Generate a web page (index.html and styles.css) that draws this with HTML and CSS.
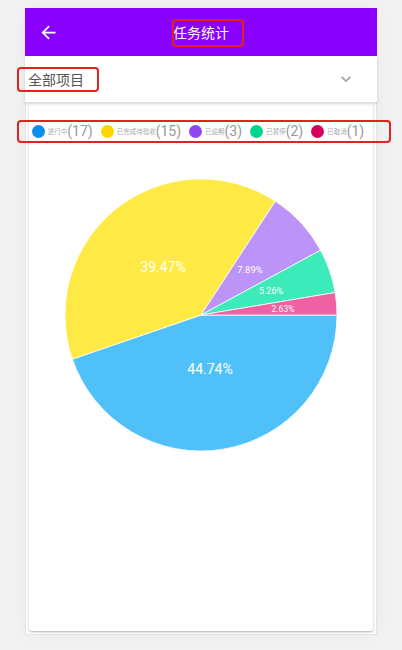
FILE: index.html
```html
<!DOCTYPE html>
<html lang="zh-CN">
<head>
<meta charset="utf-8">
<title>任务统计</title>
<link rel="stylesheet" href="styles.css">
</head>
<body>
<div class="page">
  <div class="app">
    <header class="topbar">
      <svg class="back" viewBox="0 0 24 24" width="21" height="21"><path fill="#fff" d="M20 11H7.83l5.59-5.59L12 4l-8 8 8 8 1.41-1.41L7.83 13H20v-2z"/></svg>
      <h1 class="title">任务统计</h1>
      <span class="spacer"></span>
    </header>
    <div class="select">
      <span class="select-text">全部项目</span>
      <svg class="chev" viewBox="0 0 24 24" width="20" height="20"><path fill="#9e9e9e" d="M16.59 8.59L12 13.17 7.41 8.59 6 10l6 6 6-6z"/></svg>
    </div>
    <div class="body">
      <div class="card">
        <ul class="legend">
          <li class="item"><span class="dot c1"></span><span class="lab">进行中</span><span class="num">(17)</span></li>
          <li class="item"><span class="dot c2"></span><span class="lab">已完成待验收</span><span class="num">(15)</span></li>
          <li class="item"><span class="dot c3"></span><span class="lab">已逾期</span><span class="num">(3)</span></li>
          <li class="item"><span class="dot c4"></span><span class="lab">已暂停</span><span class="num">(2)</span></li>
          <li class="item"><span class="dot c5"></span><span class="lab">已取消</span><span class="num">(1)</span></li>
        </ul>
        <svg class="pie" viewBox="0 0 344 490" width="344" height="490">
          <g stroke="#fff" stroke-width="0.8" stroke-linejoin="round">
            <path fill="#4fc1f8" d="M172 174 L308 174 A136 136 0 0 1 43.36 218.13 Z"/>
            <path fill="#ffea45" d="M172 174 L43.36 218.13 A136 136 0 0 1 246.39 60.15 Z"/>
            <path fill="#bc93f6" d="M172 174 L246.39 60.15 A136 136 0 0 1 291.58 109.22 Z"/>
            <path fill="#3deab9" d="M172 174 L291.58 109.22 A136 136 0 0 1 306.14 151.56 Z"/>
            <path fill="#ee62a3" d="M172 174 L306.14 151.56 A136 136 0 0 1 308 174 Z"/>
          </g>
          <g class="plabels" fill="#fff" text-anchor="middle" dominant-baseline="central">
            <text x="181" y="228" font-size="14">44.74%</text>
            <text x="134" y="126" font-size="14">39.47%</text>
            <text x="221" y="128" font-size="9.5">7.89%</text>
            <text x="242" y="150" font-size="9">5.26%</text>
            <text x="254" y="168" font-size="8.5">2.63%</text>
          </g>
        </svg>
      </div>
    </div>
  </div>
  <div class="mark mark-title"></div>
  <div class="mark mark-select"></div>
  <div class="mark mark-legend"></div>
</div>
</body>
</html>
```

FILE: styles.css
```css
html, body {
  margin: 0;
  padding: 0;
}
body {
  background: #f2f2f2;
  font-family: Roboto, "Noto Sans CJK SC", sans-serif;
}
.page {
  position: relative;
  padding-top: 8px;
  height: 642px;
}
.app {
  width: 352px;
  margin: 0 auto;
  background: #fff;
  box-shadow: 0 0 18px rgba(0, 0, 0, 0.04);
}
.topbar {
  height: 48px;
  background: #8a00ff;
  display: grid;
  grid-template-columns: 1fr auto 1fr;
  align-items: center;
}
.back {
  display: block;
  margin-left: 13px;
}
.title {
  margin: 0;
  font-size: 14px;
  font-weight: 400;
  color: #fff;
  font-family: Roboto, "Noto Sans CJK SC", sans-serif;
}
.select {
  position: relative;
  z-index: 1;
  height: 46px;
  display: flex;
  align-items: center;
  justify-content: space-between;
  padding: 0 21px 0 3px;
  background: #fff;
  box-shadow: 0 2px 3px rgba(0, 0, 0, 0.14);
}
.select-text {
  font-size: 14px;
  color: #555;
  font-family: Roboto, "Noto Sans CJK SC", sans-serif;
}
.chev {
  display: block;
}
.body {
  border: 1px solid #e3e3e3;
  border-top: 0;
  padding: 2px 3px 3px;
  background: #fcfcfc;
}
.card {
  height: 527px;
  box-sizing: border-box;
  padding-top: 17px;
  background: #fff;
  border-radius: 3px;
  box-shadow: 0 1px 2px rgba(0, 0, 0, 0.3);
}
.legend {
  list-style: none;
  margin: 0;
  padding: 0 6px 0 0;
  height: 20px;
  display: flex;
  justify-content: center;
  align-items: center;
  gap: 8px;
  white-space: nowrap;
}
.item {
  display: flex;
  align-items: center;
}
.dot {
  width: 13px;
  height: 13px;
  border-radius: 50%;
  margin-right: 3px;
}
.c1 { background: #0a8ff0; }
.c2 { background: #ffd600; }
.c3 { background: #9046f0; }
.c4 { background: #00d58e; }
.c5 { background: #d4005a; }
.lab {
  font-size: 6.5px;
  color: #aaa;
  font-family: "Noto Sans CJK SC", sans-serif;
}
.num {
  font-size: 14px;
  color: #999;
  font-family: Roboto, sans-serif;
}
.pie {
  display: block;
}
.plabels {
  font-family: Roboto, sans-serif;
}
.mark {
  position: absolute;
  z-index: 5;
  box-sizing: border-box;
  border: 2px solid #e5211b;
  border-radius: 4px;
}
.mark-title {
  left: 172px;
  top: 19px;
  width: 72px;
  height: 28px;
}
.mark-select {
  left: 17px;
  top: 67px;
  width: 82px;
  height: 25px;
}
.mark-legend {
  left: 17px;
  top: 120px;
  width: 374px;
  height: 23px;
}
```
